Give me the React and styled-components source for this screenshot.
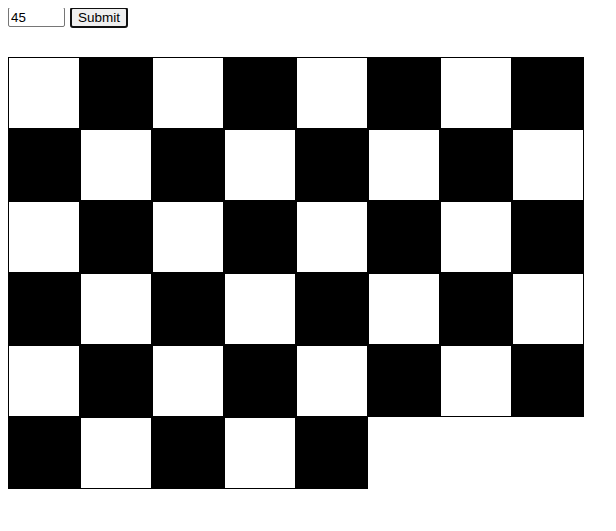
import React, { useState } from "react";
import styled, { createGlobalStyle } from "styled-components";

const GlobalStyle = createGlobalStyle`
  body {
    margin: 8px;
    background: #ffffff;
    font-family: "Liberation Sans", Arial, sans-serif;
  }
`;

const Form = styled.form`
  display: flex;
  align-items: flex-start;
  gap: 5px;
  height: 21px;
  margin: -1px 0 29px 0;
`;

const Input = styled.input`
  box-sizing: border-box;
  width: 57px;
  height: 20px;
  padding: 1px 2px;
  border: 1px solid #767676;
  border-radius: 2px;
  font-family: "Liberation Sans", Arial, sans-serif;
  font-size: 13.33px;
  color: #000;
  outline: none;
`;

const Button = styled.button`
  box-sizing: border-box;
  height: 21px;
  padding: 0 6px;
  border: 2px solid #101010;
  border-radius: 3px;
  background: #efefef;
  font-family: "Liberation Sans", Arial, sans-serif;
  font-size: 13.5px;
  color: #000;
`;

const Board = styled.div`
  display: flex;
  flex-wrap: wrap;
  width: 576px;
`;

const Cell = styled.div`
  box-sizing: border-box;
  width: 72px;
  height: 72px;
  border: 1px solid #000;
  background: ${({ $dark }) => ($dark ? "#000" : "#fff")};
`;

const COLS = 8;

const App = () => {
  const [value, setValue] = useState("45");
  const [count, setCount] = useState(45);

  const onSubmit = (e) => {
    e.preventDefault();
    setCount(parseInt(value, 10) || 0);
  };

  const cells = [];
  for (let i = 0; i < count; i++) {
    const row = Math.floor(i / COLS);
    const col = i % COLS;
    cells.push(<Cell key={i} $dark={(row + col) % 2 === 1} />);
  }

  return (
    <>
      <GlobalStyle />
      <Form onSubmit={onSubmit}>
        <Input value={value} onChange={(e) => setValue(e.target.value)} />
        <Button type="submit">Submit</Button>
      </Form>
      <Board>{cells}</Board>
    </>
  );
};

export default App;
